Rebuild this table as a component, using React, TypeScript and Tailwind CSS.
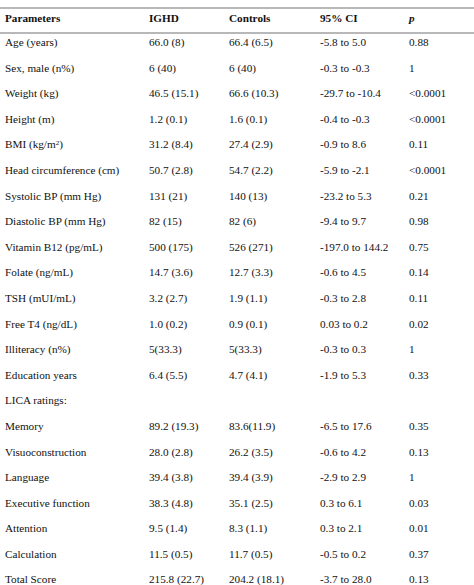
import React from "react";

type Row = [string, string, string, string, string];

const rows: Row[] = [
  ["Age (years)", "66.0 (8)", "66.4 (6.5)", "-5.8 to 5.0", "0.88"],
  ["Sex, male (n%)", "6 (40)", "6 (40)", "-0.3 to -0.3", "1"],
  ["Weight (kg)", "46.5 (15.1)", "66.6 (10.3)", "-29.7 to -10.4", "<0.0001"],
  ["Height (m)", "1.2 (0.1)", "1.6 (0.1)", "-0.4 to -0.3", "<0.0001"],
  ["BMI", "31.2 (8.4)", "27.4 (2.9)", "-0.9 to 8.6", "0.11"],
  ["Head circumference (cm)", "50.7 (2.8)", "54.7 (2.2)", "-5.9 to -2.1", "<0.0001"],
  ["Systolic BP (mm Hg)", "131 (21)", "140 (13)", "-23.2 to 5.3", "0.21"],
  ["Diastolic BP (mm Hg)", "82 (15)", "82 (6)", "-9.4 to 9.7", "0.98"],
  ["Vitamin B12 (pg/mL)", "500 (175)", "526 (271)", "-197.0 to 144.2", "0.75"],
  ["Folate (ng/mL)", "14.7 (3.6)", "12.7 (3.3)", "-0.6 to 4.5", "0.14"],
  ["TSH (mUI/mL)", "3.2 (2.7)", "1.9 (1.1)", "-0.3 to 2.8", "0.11"],
  ["Free T4 (ng/dL)", "1.0 (0.2)", "0.9 (0.1)", "0.03 to 0.2", "0.02"],
  ["Illiteracy (n%)", "5(33.3)", "5(33.3)", "-0.3 to 0.3", "1"],
  ["Education years", "6.4 (5.5)", "4.7 (4.1)", "-1.9 to 5.3", "0.33"],
  ["LICA ratings:", "", "", "", ""],
  ["Memory", "89.2 (19.3)", "83.6(11.9)", "-6.5 to 17.6", "0.35"],
  ["Visuoconstruction", "28.0 (2.8)", "26.2 (3.5)", "-0.6 to 4.2", "0.13"],
  ["Language", "39.4 (3.8)", "39.4 (3.9)", "-2.9 to 2.9", "1"],
  ["Executive function", "38.3 (4.8)", "35.1 (2.5)", "0.3 to 6.1", "0.03"],
  ["Attention", "9.5 (1.4)", "8.3 (1.1)", "0.3 to 2.1", "0.01"],
  ["Calculation", "11.5 (0.5)", "11.7 (0.5)", "-0.5 to 0.2", "0.37"],
  ["Total Score", "215.8 (22.7)", "204.2 (18.1)", "-3.7 to 28.0", "0.13"],
];

const cols = "grid grid-cols-[144px_80px_91px_89px_1fr] pl-[5px]";

export default function App() {
  return (
    <div
      className="w-[474px] h-[585px] overflow-hidden bg-white text-[#111] text-[11.2px] leading-[13px]"
      style={{ fontFamily: '"Liberation Serif", "Times New Roman", serif' }}
    >
      {/* caption, cut off by the top edge: only descenders show */}
      <div className="h-[7px] overflow-hidden">
        <div className={`${cols} -mt-[15px] whitespace-nowrap`}>
          <span className="pl-[6px]">Table 2 Demographic</span>
          <span className="-ml-[48px]">data (IGHD), and</span>
          <span></span>
          <span className="-ml-[95px]">with p</span>
          <span></span>
        </div>
      </div>
      <div className={`${cols} border-t-2 border-b-2 border-[#b8b8b8] h-[27px] pt-[3px] font-bold`}>
        <span>Parameters</span>
        <span>IGHD</span>
        <span>Controls</span>
        <span>95% CI</span>
        <span className="italic">p</span>
      </div>
      {rows.map((r) => (
        <div key={r[0]} className={`${cols} h-[25.6px] pt-[2px]`}>
          <span>
            {r[0] === "BMI" ? (
              <>
                BMI (kg/m<sup className="text-[7px]">2</sup>)
              </>
            ) : (
              r[0]
            )}
          </span>
          <span>{r[1]}</span>
          <span>{r[2]}</span>
          <span>{r[3]}</span>
          <span>{r[4]}</span>
        </div>
      ))}
    </div>
  );
}
